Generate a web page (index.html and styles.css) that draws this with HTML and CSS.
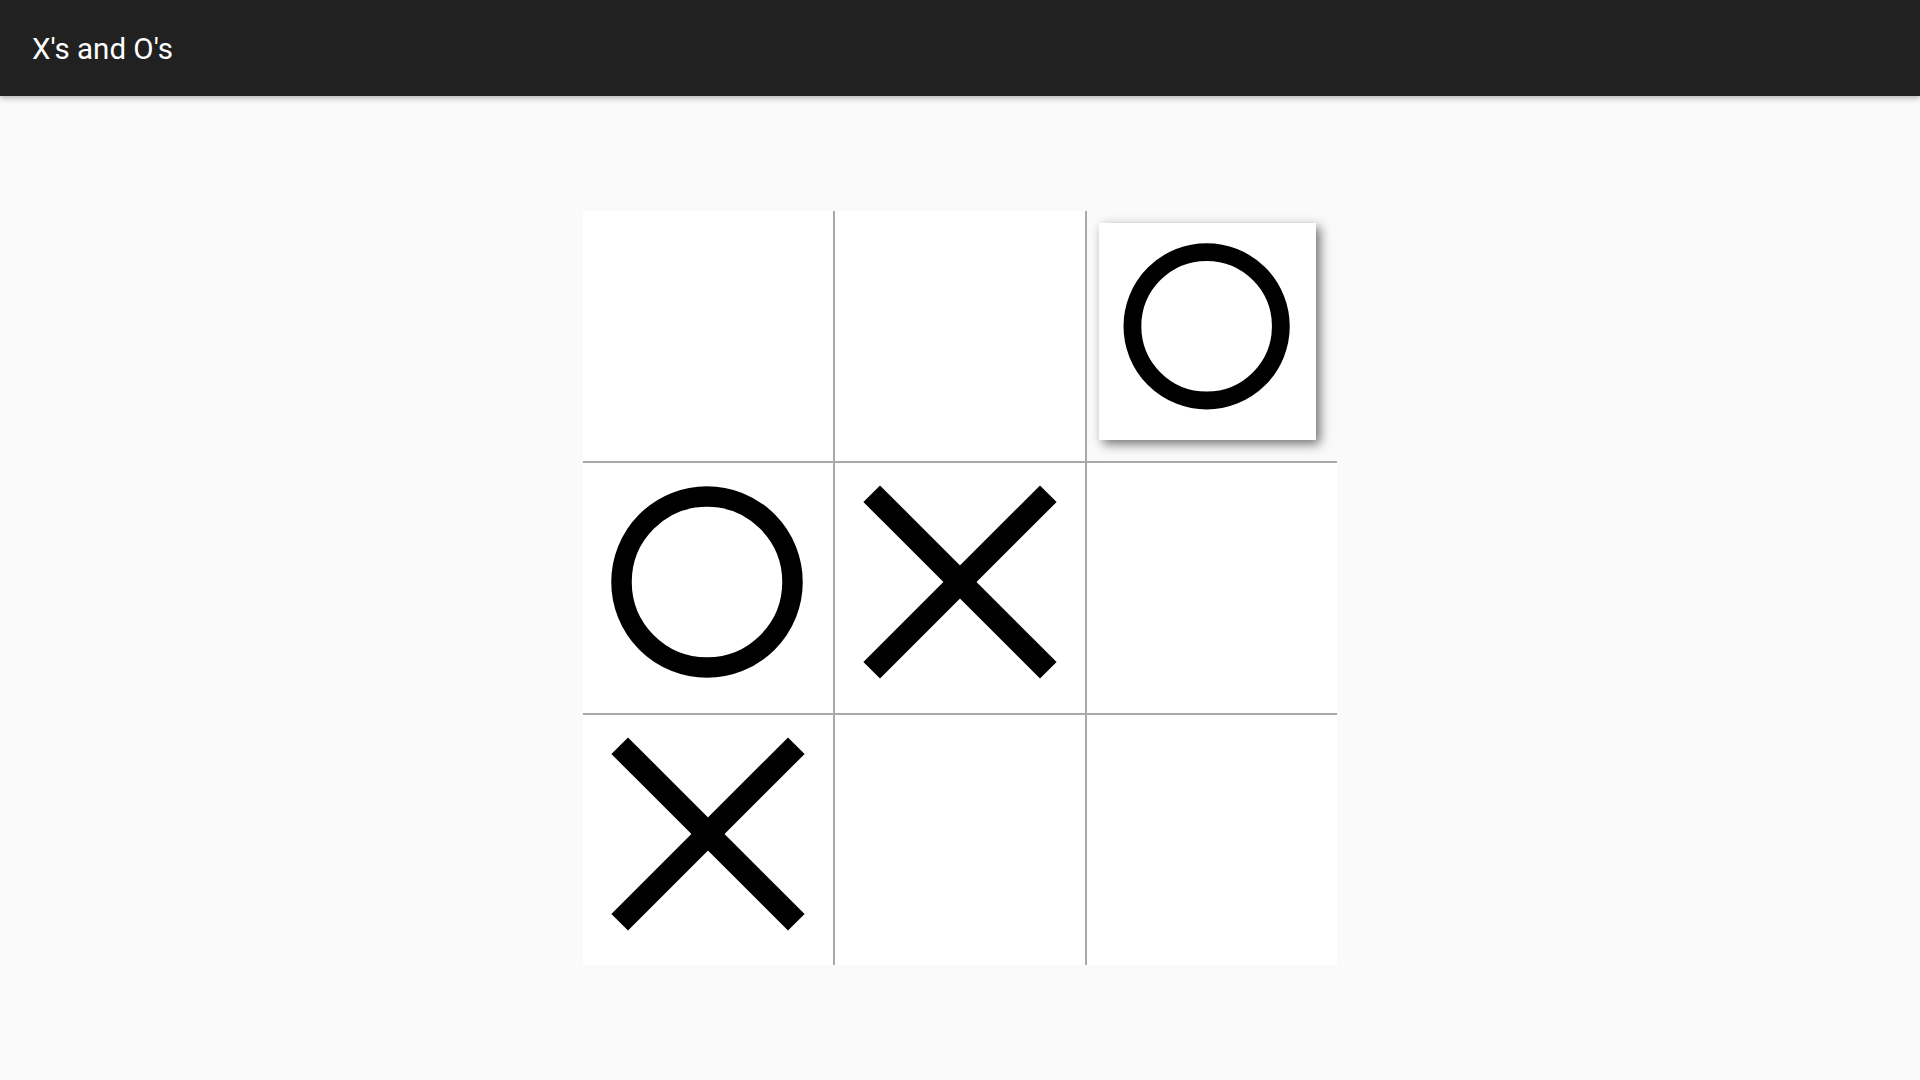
FILE: index.html
```html
<!DOCTYPE html>
<html lang="en">
<head>
    <meta charset="UTF-8">
    <meta name="viewport" content="width=device-width, initial-scale=1.0">
    <title>X's and O's</title>
    <link rel="stylesheet" href="styles.css">
</head>
<body>
    <header class="toolbar">
        <span class="title">X's and O's</span>
    </header>

    <main class="content">
        <div class="board">
            <div class="cell"></div>
            <div class="cell"></div>
            <div class="cell last-col lifted">
                <div class="piece">
                    <svg viewBox="0 0 250 250"><circle class="o-mark" cx="124" cy="119" r="85.5" /></svg>
                </div>
            </div>

            <div class="cell">
                <svg viewBox="0 0 250 250"><circle class="o-mark" cx="124" cy="119" r="85.5" /></svg>
            </div>
            <div class="cell">
                <svg viewBox="0 0 250 250">
                    <polygon class="x-mark" points="45,22.4 221.6,199 205,215.6 28.4,39" />
                    <polygon class="x-mark" points="205,22.4 221.6,39 45,215.6 28.4,199" />
                </svg>
            </div>
            <div class="cell last-col"></div>

            <div class="cell last-row">
                <svg viewBox="0 0 250 250">
                    <polygon class="x-mark" points="45,22.4 221.6,199 205,215.6 28.4,39" />
                    <polygon class="x-mark" points="205,22.4 221.6,39 45,215.6 28.4,199" />
                </svg>
            </div>
            <div class="cell last-row"></div>
            <div class="cell last-row last-col"></div>
        </div>
    </main>
</body>
</html>
```

FILE: styles.css
```css
body {
    margin: 0;
    font-family: Roboto, "Liberation Sans", sans-serif;
    background-color: #fafafa;
    min-height: 100vh;
}
.toolbar {
    height: 96px;
    display: flex;
    align-items: center;
    padding: 2px 32px 0;
    box-sizing: border-box;
    background-color: #212121;
    color: white;
    box-shadow: 0 2px 6px rgba(0,0,0,0.3);
    position: relative;
}
.title {
    font-size: 29.5px;
    font-weight: 400;
}
.content {
    display: flex;
    justify-content: center;
    padding-top: 115px;
}
.board {
    display: grid;
    grid-template-columns: repeat(3, auto);
}
.cell {
    width: 250px;
    height: 250px;
    background-color: white;
    border-right: 2px solid #a9a9a9;
    border-bottom: 2px solid #a9a9a9;
}
.cell.last-col {
    border-right: none;
}
.cell.last-row {
    border-bottom: none;
}
.cell svg {
    display: block;
    width: 250px;
    height: 250px;
}
.o-mark {
    fill: none;
    stroke: #000;
    stroke-width: 20.5px;
}
.x-mark {
    fill: #000;
}
/* picked-up piece floats above the board */
.cell.lifted {
    background-color: transparent;
}
.piece {
    background-color: white;
    transform: translate(-4.5px, -4.5px) scale(0.868);
    box-shadow: 5px 5px 12px rgba(0,0,0,0.55);
}
```
